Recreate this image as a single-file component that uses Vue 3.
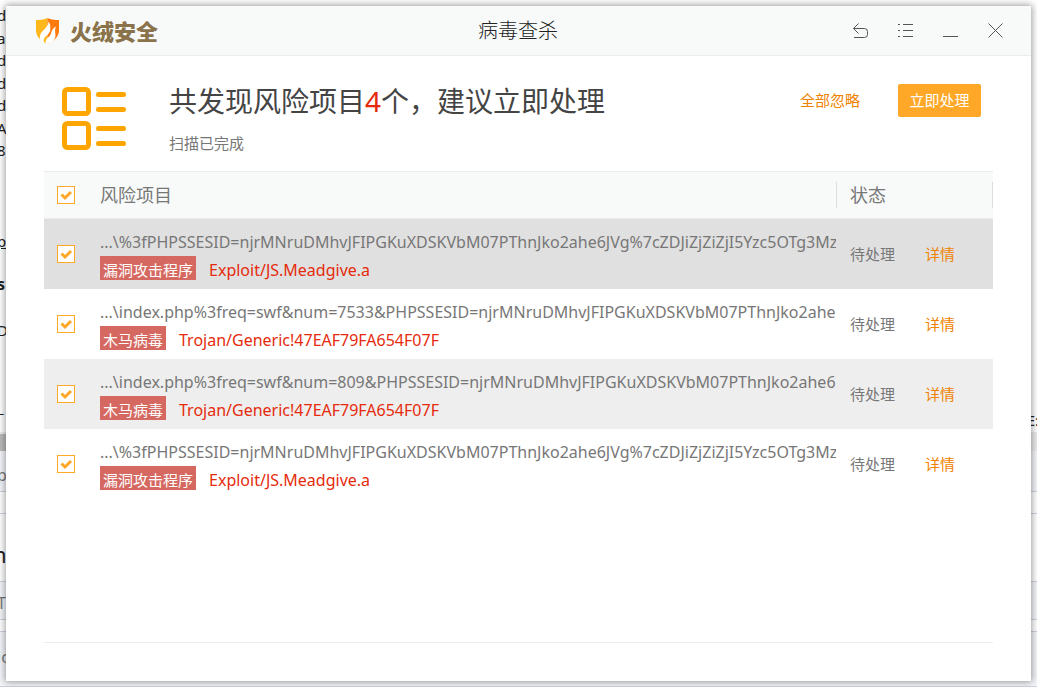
<script setup>
import { ref, computed } from 'vue'

const items = ref([
  { path: '...\\%3fPHPSSESID=njrMNruDMhvJFIPGKuXDSKVbM07PThnJko2ahe6JVg%7cZDJiZjZiZjI5Yzc5OTg3Mz', tag: '漏洞攻击程序', name: 'Exploit/JS.Meadgive.a', checked: true, tone: 'active' },
  { path: '...\\index.php%3freq=swf&num=7533&PHPSSESID=njrMNruDMhvJFIPGKuXDSKVbM07PThnJko2ahe', tag: '木马病毒', name: 'Trojan/Generic!47EAF79FA654F07F', checked: true, tone: '' },
  { path: '...\\index.php%3freq=swf&num=809&PHPSSESID=njrMNruDMhvJFIPGKuXDSKVbM07PThnJko2ahe6', tag: '木马病毒', name: 'Trojan/Generic!47EAF79FA654F07F', checked: true, tone: 'alt' },
  { path: '...\\%3fPHPSSESID=njrMNruDMhvJFIPGKuXDSKVbM07PThnJko2ahe6JVg%7cZDJiZjZiZjI5Yzc5OTg3Mz', tag: '漏洞攻击程序', name: 'Exploit/JS.Meadgive.a', checked: true, tone: '' },
])

const allChecked = computed({
  get: () => items.value.every((item) => item.checked),
  set: (value) => items.value.forEach((item) => { item.checked = value }),
})

const scraps = [
  { text: 'd', top: 5, kind: 'small' },
  { text: 'a', top: 28, kind: 'small' },
  { text: 'd', top: 50, kind: 'small' },
  { text: 'd', top: 73, kind: 'small' },
  { text: 'd', top: 95, kind: 'small' },
  { text: 'A', top: 118, kind: 'small' },
  { text: '8', top: 140, kind: 'small' },
  { text: 'p', top: 231, kind: 'small link' },
  { text: 's', top: 274, kind: 'strong' },
  { text: 'D', top: 320, kind: 'small' },
  { text: '_', top: 397, kind: 'small' },
  { text: 'p', top: 465, kind: 'medium' },
  { text: 'n', top: 544, kind: 'large' },
  { text: 'T', top: 593, kind: 'medium' },
  { text: 'ic', top: 647, kind: 'medium' },
]

const bands = [
  { top: 432, height: 19, kind: 'gray' },
  { top: 451, height: 41, kind: 'pale' },
  { top: 513, height: 1, kind: 'rule' },
  { top: 581, height: 39, kind: 'pale ruled' },
  { top: 631, height: 56, kind: 'pale ruled' },
]
</script>

<template>
  <div class="desktop">
    <div class="backdrop" aria-hidden="true">
      <div v-for="band in bands" :key="band.top" class="band" :class="band.kind" :style="{ top: band.top + 'px', height: band.height + 'px' }"></div>
      <div class="thumb"></div>
      <span v-for="scrap in scraps" :key="scrap.top" class="scrap" :class="scrap.kind" :style="{ top: scrap.top + 'px' }">{{ scrap.text }}</span>
      <span class="scrap-right">E:</span>
    </div>

    <main class="window">
      <header class="titlebar">
        <div class="brand">
          <svg class="shield" viewBox="0 0 23 26" aria-hidden="true">
            <path d="M0 2C5 2 8 1.500 11.500 0V26C5 23 0 19 0 12Z" fill="#ffb81c" />
            <path d="M11.500 0C15 1.500 18 2 23 2V12C23 19 18 23 11.500 26Z" fill="#ff7a0c" />
            <path d="M12.500 3.500C12.500 8 9 10.500 6.200 13.500C3.200 17 3 21 6 24L8.300 25.500C6.800 21.500 8.500 19.300 11 17.300C13.300 15.400 14.600 13.500 14.200 10.500C14.800 8 14 5.500 12.500 3.500Z" fill="#fff" />
            <path d="M20 8.500C17 10 15.800 12 15.300 14.500C14.700 17.800 12.800 18.800 11 20.500C9.300 22.200 9.300 24.300 10.500 26C15 25.500 18.500 22.500 19.300 19C20 15.800 18 12.500 20 8.500Z" fill="#fff" />
          </svg>
          <span class="brand-name">火绒安全</span>
        </div>
        <h1 class="title">病毒查杀</h1>
        <nav class="controls">
          <button type="button" aria-label="返回">
            <svg viewBox="0 0 17 17"><path d="M6.500 1.500L1.500 6.500L6.500 11.500M1.500 6.500H12.500Q15.500 6.500 15.500 9.500V12.500Q15.500 15.500 12.500 15.500H2" /></svg>
          </button>
          <button type="button" aria-label="菜单">
            <svg viewBox="0 0 17 17"><path d="M1 2.500H3M6 2.500H16M1 8.500H3M6 8.500H16M1 14.500H3M6 14.500H16" /></svg>
          </button>
          <button type="button" aria-label="最小化">
            <svg viewBox="0 0 17 17"><path d="M1 14.500H16" /></svg>
          </button>
          <button type="button" aria-label="关闭">
            <svg viewBox="0 0 17 17"><path d="M1.500 1.500L15.500 15.500M15.500 1.500L1.500 15.500" /></svg>
          </button>
        </nav>
      </header>

      <section class="summary">
        <svg class="list-icon" viewBox="0 0 65 64" aria-hidden="true">
          <rect x="2.500" y="2.500" width="24" height="24" rx="3" />
          <rect x="2.500" y="36.500" width="24" height="24" rx="3" />
          <path d="M36.500 7.500H61.500M36.500 22.500H61.500M36.500 41.500H61.500M36.500 56.500H61.500" />
        </svg>
        <div class="summary-text">
          <h2>共发现风险项目<em>4</em>个，建议立即处理</h2>
          <p>扫描已完成</p>
        </div>
        <div class="actions">
          <a href="#ignore">全部忽略</a>
          <button type="button">立即处理</button>
        </div>
      </section>

      <div class="results">
        <table>
          <colgroup>
            <col class="col-check" />
            <col />
            <col class="col-status" />
            <col class="col-detail" />
          </colgroup>
          <thead>
            <tr>
              <th class="check">
                <label class="box">
                  <input v-model="allChecked" type="checkbox" aria-label="全选" />
                  <svg v-if="allChecked" viewBox="0 0 18 18"><path d="M4.500 8.500L8 12L14 6" /></svg>
                </label>
              </th>
              <th scope="col">风险项目</th>
              <th scope="col" colspan="2"><div class="divided">状态</div></th>
            </tr>
          </thead>
          <tbody>
            <tr v-for="(item, index) in items" :key="index" :class="item.tone">
              <td class="check">
                <label class="box">
                  <input v-model="item.checked" type="checkbox" :aria-label="item.name" />
                  <svg v-if="item.checked" viewBox="0 0 18 18"><path d="M4.500 8.500L8 12L14 6" /></svg>
                </label>
              </td>
              <td class="risk">
                <div class="path">{{ item.path }}</div>
                <div class="threat">
                  <span class="tag">{{ item.tag }}</span>
                  <span class="name">{{ item.name }}</span>
                </div>
              </td>
              <td class="status">待处理</td>
              <td class="detail"><a href="#detail">详情</a></td>
            </tr>
          </tbody>
        </table>
      </div>
    </main>
  </div>
</template>

<style>
body {
  margin: 0;
}
</style>

<style scoped>
.desktop {
  position: relative;
  box-sizing: border-box;
  min-height: 100vh;
  padding: 6px;
  display: flex;
  overflow: hidden;
  background: #fff;
  color: #777;
  font-family: "Noto Sans", "Noto Sans CJK SC", sans-serif;
  font-size: 15px;
}

.backdrop {
  position: absolute;
  inset: 0;
  color: #222;
}

.band {
  position: absolute;
  left: 0;
  right: 0;
  box-sizing: border-box;
}

.gray {
  background: #ececec;
}

.pale {
  background: #f4f6fa;
  border-bottom: 1px solid #cdd2e0;
}

.ruled {
  border-top: 1px solid #cdd2e0;
}

.rule {
  background: #cdd2e0;
}

.thumb {
  position: absolute;
  left: 0;
  top: 434px;
  width: 6px;
  height: 17px;
  background: #bbb;
}

.scrap {
  position: absolute;
  left: -3px;
  line-height: 20px;
  font-size: 15px;
}

.link {
  text-decoration: underline;
}

.strong {
  font-size: 16px;
  font-weight: 700;
}

.medium {
  font-size: 16px;
  color: #777;
}

.large {
  left: -7px;
  font-size: 22px;
}

.scrap-right {
  position: absolute;
  right: -2px;
  top: 410px;
  line-height: 20px;
  font-size: 15px;
}

.window {
  position: relative;
  flex: 1;
  min-width: 0;
  display: flex;
  flex-direction: column;
  background: #fff;
  box-shadow: 0 0 7px 1px rgba(0, 0, 0, 0.4);
}

.titlebar {
  display: grid;
  grid-template-columns: 1fr auto 1fr;
  align-items: center;
  height: 49px;
  padding: 0 13px 0 12px;
  background: #f8faf9;
  border-bottom: 1px solid #ececec;
}

.brand {
  display: flex;
  align-items: center;
  gap: 11px;
  margin-left: 18px;
}

.shield {
  width: 23px;
  height: 26px;
}

.brand-name {
  color: #8a724a;
  font-size: 22px;
  font-weight: 900;
  line-height: 28px;
}

.title {
  margin: 0;
  color: #222;
  font-size: 20px;
  font-weight: 300;
  line-height: 28px;
}

.controls {
  display: flex;
  justify-content: flex-end;
}

.controls button {
  display: grid;
  place-items: center;
  width: 45px;
  height: 48px;
  padding: 0;
  border: 0;
  background: none;
}

.controls svg {
  width: 17px;
  height: 17px;
  fill: none;
  stroke: #555;
  stroke-width: 1;
}

.summary {
  display: flex;
  align-items: flex-start;
  padding: 28px 50px 0 56px;
  height: 87px;
}

.list-icon {
  width: 65px;
  height: 64px;
  margin-top: 3px;
  fill: none;
  stroke: #ffa500;
  stroke-width: 5;
  stroke-linecap: round;
}

.summary-text {
  flex: 1;
  margin-left: 42px;
}

.summary-text h2 {
  margin: 0;
  color: #444;
  font-size: 28px;
  font-weight: 400;
  line-height: 34px;
}

.summary-text em {
  color: #e52b0c;
  font-style: normal;
}

.summary-text p {
  margin: 15px 0 0;
  line-height: 20px;
}

.actions {
  display: flex;
  align-items: center;
  gap: 38px;
}

a {
  color: #f08200;
  text-decoration: none;
}

.actions a {
  padding-bottom: 2px;
}

.actions button {
  width: 83px;
  height: 33px;
  padding: 0 0 2px;
  border: 0;
  border-radius: 2px;
  background: #ffa726;
  color: #fff;
  font: inherit;
}

.results {
  flex: 1;
  margin: 0 38px 38px;
  border-bottom: 1px solid #ececec;
}

table {
  width: 100%;
  table-layout: fixed;
  border-collapse: separate;
  border-spacing: 0;
}

.col-check {
  width: 56px;
}

.col-status {
  width: 89px;
}

.col-detail {
  width: 68px;
}

th {
  box-sizing: border-box;
  height: 48px;
  padding: 0;
  border: solid #ececec;
  border-width: 1px 0;
  background: #f8faf9;
  font-size: 18px;
  font-weight: 400;
  line-height: 26px;
  text-align: left;
}

.divided {
  padding-left: 13px;
  border: solid #ddd;
  border-width: 0 1px;
}

td {
  box-sizing: border-box;
  height: 70px;
  padding: 0;
}

.active {
  background: #e0e0e0;
}

.alt {
  background: #eee;
}

.check {
  padding-left: 13px;
}

.box {
  display: grid;
  width: 18px;
  height: 18px;
}

.box input {
  grid-area: 1 / 1;
  appearance: none;
  box-sizing: border-box;
  width: 18px;
  height: 18px;
  margin: 0;
  border: 1px solid #ffa726;
  background: #fff;
}

.box svg {
  grid-area: 1 / 1;
  width: 18px;
  height: 18px;
  fill: none;
  stroke: #ffa726;
  stroke-width: 3;
  pointer-events: none;
}

.risk {
  padding: 2px 0 0;
}

.path {
  overflow: hidden;
  font-size: 16px;
  line-height: 24px;
  white-space: nowrap;
}

.threat {
  display: flex;
  gap: 13px;
  margin-top: 2px;
  line-height: 20px;
}

.tag {
  padding: 4px 3px 0;
  background: #d56860;
  color: #fff;
}

.name {
  padding-top: 4px;
  color: #e52b0c;
  font-size: 16px;
}

.status {
  padding: 0 0 2px 14px;
}

.detail {
  padding-bottom: 2px;
}
</style>
